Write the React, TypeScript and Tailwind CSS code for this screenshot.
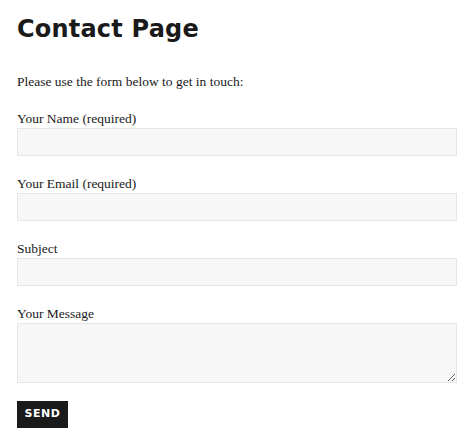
import React from "react";

const serif = { fontFamily: '"Liberation Serif", "DejaVu Serif", serif' };

function Field({ label, tall }: { label: string; tall?: boolean }) {
  return (
    <div className="flex flex-col">
      <label className="text-[13.5px] leading-[16px] text-[#1a1a1a] mb-[1px]" style={serif}>
        {label}
      </label>
      {tall ? (
        <textarea className="block w-full h-[60px] bg-[#f7f7f7] border border-[#e6e6e6] resize-y outline-none" />
      ) : (
        <input className="w-full h-[28px] bg-[#f7f7f7] border border-[#e6e6e6] outline-none" />
      )}
    </div>
  );
}

export default function App() {
  return (
    <div className="w-[474px] h-[443px] bg-white px-[17px] pt-[13px] overflow-hidden">
      <h1
        className="text-[24px] leading-[32px] font-bold text-[#1a1a1a] tracking-[0.2px]"
        style={{ fontFamily: '"DejaVu Sans", "Noto Sans", sans-serif' }}
      >
        Contact Page
      </h1>
      <p className="mt-[29px] text-[13.5px] leading-[16px] text-[#1a1a1a]" style={serif}>
        Please use the form below to get in touch:
      </p>
      <div className="mt-[21px] flex flex-col gap-[20px]">
        <Field label="Your Name (required)" />
        <Field label="Your Email (required)" />
        <Field label="Subject" />
        <Field label="Your Message" tall />
      </div>
      <button
        className="mt-[18px] w-[51px] h-[27px] bg-[#1a1a1a] text-white text-[11px] font-bold tracking-[0.5px] flex items-center justify-center"
        style={{ fontFamily: '"DejaVu Sans", "Noto Sans", sans-serif' }}
      >
        SEND
      </button>
    </div>
  );
}
